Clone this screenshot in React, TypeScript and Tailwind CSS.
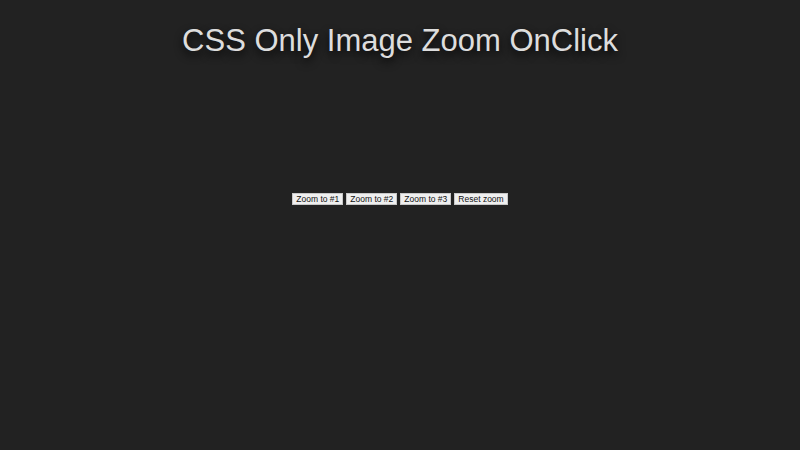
export default function App() {
  const buttons = ["Zoom to #1", "Zoom to #2", "Zoom to #3", "Reset zoom"];
  return (
    <div
      className="min-h-[450px] w-full bg-[#222222] flex flex-col items-center"
      style={{ fontFamily: '"Liberation Sans", Arial, sans-serif' }}
    >
      <h1 className="mt-[23px] text-[31px] leading-[36px] text-[#dddddd] [text-shadow:0_4px_8px_rgba(0,0,0,0.9)]">
        CSS Only Image Zoom OnClick
      </h1>
      <div className="mt-[134px] flex gap-[3px]">
        {buttons.map((b) => (
          <button
            key={b}
            className="h-[12px] px-[3px] bg-[#efefef] border border-[#c8c8c8] text-[8.5px] leading-[10px] text-[#111111] flex items-center"
          >
            {b}
          </button>
        ))}
      </div>
    </div>
  );
}
